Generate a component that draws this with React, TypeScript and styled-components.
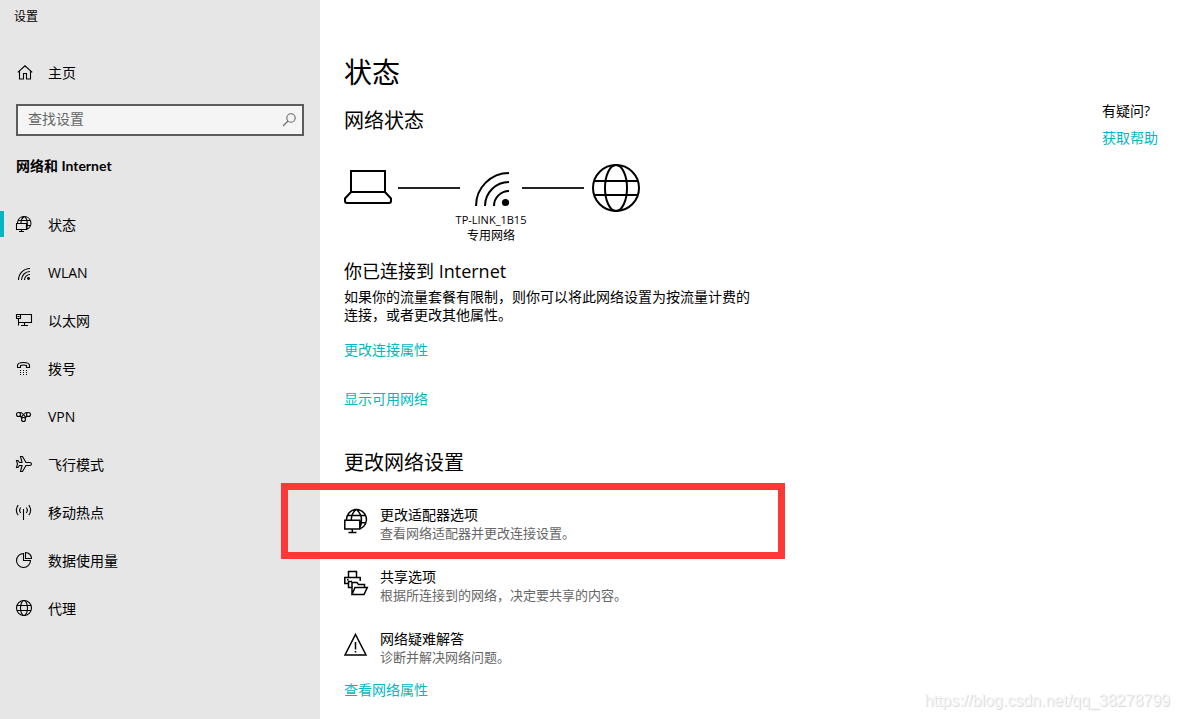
import React from 'react';
import styled, { createGlobalStyle } from 'styled-components';

const GlobalStyle = createGlobalStyle`
  * { box-sizing: border-box; }
  body {
    margin: 0;
    background: #fff;
    color: #000;
    font: 14px/18px "Open Sans", "Noto Sans CJK SC", sans-serif;
  }
  h1, h2, h3, p, ul { margin: 0; padding: 0; font-weight: 400; }
  ul { list-style: none; }
  button, input { font: inherit; color: inherit; }
`;

const Page = styled.div`
  display: flex;
  min-height: 100vh;
  position: relative;
`;

const Sidebar = styled.aside`
  flex: none;
  width: 320px;
  background: #e6e6e6;
`;

const WindowTitle = styled.div`
  padding: 0 14px;
  font-size: 12px;
  line-height: 34px;
`;

const SideLink = styled.a<{ $active?: boolean }>`
  display: flex;
  align-items: center;
  gap: 16px;
  height: 48px;
  padding: 0 16px 0 12px;
  color: #000;
  text-decoration: none;
  border-left: 4px solid transparent;
  border-image: ${p => (p.$active
    ? 'linear-gradient(transparent 25%, #00b7c3 25%, #00b7c3 75%, transparent 75%) 1'
    : 'none')};
`;

const SideLabel = styled.span`
  padding-top: 2px;
`;

const HomeRow = styled.div`
  margin-top: 14px;
`;

const SearchForm = styled.form`
  display: flex;
  align-items: center;
  height: 32px;
  margin: 8px 16px 0;
  border: 2px solid #5c5c5c;
  background: #f5f5f5;
`;

const SearchInput = styled.input`
  flex: 1;
  min-width: 0;
  padding: 0 10px 2px;
  border: 0;
  outline: 0;
  background: transparent;
  line-height: 20px;
  &::placeholder { color: #666; opacity: 1; }
`;

const SearchButton = styled.button`
  display: flex;
  padding: 0 5px;
  border: 0;
  background: transparent;
  color: #666;
`;

const Category = styled.h2`
  margin: 20px 16px 24px;
  font-family: Lato, "Noto Sans CJK SC", sans-serif;
  font-size: 14px;
  font-weight: 700;
  line-height: 20px;
`;

const Main = styled.main`
  flex: 1;
  min-width: 0;
  display: flex;
  justify-content: space-between;
  padding: 52px 20px 16px 24px;
`;

const Content = styled.div`
  min-width: 0;
`;

const PageTitle = styled.h1`
  font-size: 28px;
  line-height: 40px;
`;

const SectionTitle = styled.h2`
  margin-top: 15px;
  font-size: 20px;
  line-height: 28px;
`;

const Diagram = styled.div`
  display: grid;
  grid-template-columns: 48px 62px 50px 62px 52px;
  grid-template-rows: 48px auto;
  column-gap: 6px;
  align-items: center;
  margin-top: 29px;
`;

const Connector = styled.span`
  height: 2px;
  background: #222;
`;

const NetworkLabel = styled.div`
  display: flex;
  flex-direction: column;
  grid-column: 2 / 5;
  justify-self: center;
  font-size: 12px;
  line-height: 16px;
  text-align: center;
`;

const NetworkName = styled.span`
  font-size: 11px;
`;

const StatusTitle = styled.h3`
  margin-top: 15px;
  font-size: 18px;
  line-height: 24px;
`;

const StatusText = styled.p`
  max-width: 412px;
  margin-top: 5px;
`;

const LinkRow = styled.p<{ $gap: number }>`
  margin-top: ${p => p.$gap}px;
  line-height: 20px;
`;

const Link = styled.a`
  color: #00b7c3;
  text-decoration: none;
`;

const SettingsTitle = styled(SectionTitle)`
  margin-top: 40px;
`;

const OptionList = styled.ul`
  display: flex;
  flex-direction: column;
  gap: 26px;
  margin-top: 29px;
`;

const OptionItem = styled.li`
  position: relative;
`;

const Option = styled.button`
  display: flex;
  gap: 12px;
  padding: 0;
  border: 0;
  background: transparent;
  text-align: left;
`;

const OptionText = styled.span`
  display: flex;
  flex-direction: column;
`;

const OptionHint = styled.span`
  color: #666;
  font-size: 13px;
`;

const Highlight = styled.span`
  position: absolute;
  top: -23px;
  left: -63px;
  width: 504px;
  height: 76px;
  border: 7px solid #fd3836;
  pointer-events: none;
`;

const Help = styled.aside`
  flex: none;
  width: 57px;
  padding-top: 49px;
  line-height: 20px;
`;

const Watermark = styled.div`
  position: absolute;
  right: 9px;
  bottom: 8px;
  color: #f6f6f6;
  font: 16px/20px "Liberation Sans", sans-serif;
  text-shadow: 1px 1px 0 #dcdcdc;
`;

const Svg = styled.svg`
  flex: none;
  overflow: visible;
  fill: none;
  stroke: currentColor;
`;

const OptionSvg = styled(Svg)`
  margin-top: 2px;
`;

type Glyph = React.ReactNode;

const Icon = ({ children }: { children: Glyph }) => (
  <Svg width="16" height="16" viewBox="0 0 16 16" strokeWidth="1.1" aria-hidden="true">{children}</Svg>
);

const OptionIcon = ({ children }: { children: Glyph }) => (
  <OptionSvg width="24" height="26" viewBox="0 0 24 26" strokeWidth="1.5" aria-hidden="true">{children}</OptionSvg>
);

const globe = (
  <>
    <circle cx="8" cy="8" r="7.5" />
    <ellipse cx="8" cy="8" rx="3.5" ry="7.5" />
    <path d="M1 5.5h14M1 10.5h14" />
  </>
);

const icons = {
  home: <path d="M1.8 8.3 9 1.8l7.2 6.5M3.5 7v8h4V9.500h3V15h4V7" />,
  status: (
    <path d="M1.500 7A6.700 6.700 0 1 1 11 13.300M8 .5C6 2 5 4 5 7M8.500 .5C10.500 2 11.500 5 11.300 9c0 1-.2 2.500-.8 4M2 4.500h12.500M10.500 9.500h4.200M.5 7.500h10v6H.5zM5.500 13.500v2M3 15.500h5" />
  ),
  wlan: (
    <>
      <path d="M2.500 16A11.500 11.500 0 0 1 14 4.500M5.500 16A8.500 8.500 0 0 1 14 7.500M8.500 16a5.500 5.500 0 0 1 5.500-5.500" />
      <circle cx="12.500" cy="14.500" r="1.400" fill="currentColor" stroke="none" />
    </>
  ),
  ethernet: <path d="M.5 2.500h4v4h-4zM4.500 2.500h11v8h-13M1.500 4.500h2M2.500 6.500v7M8.500 10.500v3M5 13.500h7" />,
  dialup: (
    <>
      <path d="M1.500 7.500V5.500C1.500 3.500 4 2.500 7.500 2.500s6 1 6 3v2h-3V5.500C9 5 6 5 4.500 5.500v2z" />
      <path d="M4 10.500h1M7 10.500h1M10 10.500h1M4 12.500h1M7 12.500h1M10 12.500h1M4 14.500h1M7 14.500h1M10 14.500h1" />
    </>
  ),
  vpn: (
    <>
      <circle cx="2.500" cy="6.500" r="2" />
      <circle cx="12.500" cy="6.500" r="2" />
      <circle cx="7.500" cy="11.500" r="2" />
      <path d="M3.500 4.700h2L9 8.200v2M11.500 4.700h-2L6 8.200v2M4 8l2 2M11 8l-2 2" />
    </>
  ),
  airplane: (
    <path d="M15.500 8c0-1-1-1.500-2-1.500H10L6.500.5h-2L6 6.500H3.500L2 4.500H.5L1.500 8l-1 3.500H2l1.500-2H6l-1.500 6h2l3.500-6h3.500c1 0 2-.5 2-1.500z" />
  ),
  hotspot: (
    <path d="M7.500 5v11M4.800 3.500c-1.300 1.500-1.300 4 0 5.500M10.200 3.500c1.300 1.500 1.300 4 0 5.500M2.200 1.200c-2.200 3-2.200 7 0 10M12.800 1.200c2.200 3 2.200 7 0 10" />
  ),
  usage: <path d="M7.500 1.500a7 7 0 1 0 7 7h-7zM9.500.5v6h6a6 6 0 0 0-6-6z" />,
  proxy: globe,
};

const navItems: { label: string; icon: Glyph; active?: boolean }[] = [
  { label: '状态', icon: icons.status, active: true },
  { label: 'WLAN', icon: icons.wlan },
  { label: '以太网', icon: icons.ethernet },
  { label: '拨号', icon: icons.dialup },
  { label: 'VPN', icon: icons.vpn },
  { label: '飞行模式', icon: icons.airplane },
  { label: '移动热点', icon: icons.hotspot },
  { label: '数据使用量', icon: icons.usage },
  { label: '代理', icon: icons.proxy },
];

const options: { title: string; hint: string; icon: Glyph; highlighted?: boolean }[] = [
  {
    title: '更改适配器选项',
    hint: '查看网络适配器并更改连接设置。',
    highlighted: true,
    icon: (
      <path d="M2.500 11.500A10 10 0 1 1 16.500 20.600M12 1.500C9 4 7.500 7.500 7.300 11.500M12.500 1.500c3.500 3 5 6.500 5 10.500 0 3-.5 5.500-2 8M3.500 7.500h17.800M16.500 14.800h5.200M.8 12.300h15v8.800H.8zM8.300 21v3.500M4.500 24.500h8" />
    ),
  },
  {
    title: '共享选项',
    hint: '根据所连接到的网络，决定要共享的内容。',
    icon: (
      <path d="M4.500 7.500v-6h8v6M4.500 13.500H.8v-6h15.400V11M3 9.800h1.500M8 17.500H4.500v-6H8M8 24.500V12.500h5l1.500 2H20.500v3M8 24.500l3-7h12.300l-3.300 7z" />
    ),
  },
  {
    title: '网络疑难解答',
    hint: '诊断并解决网络问题。',
    icon: <path d="M11.500 2.500 22 23H1zM11.500 10v7.500M11.500 19v1.500" />,
  },
];

export default function App() {
  return (
    <>
      <GlobalStyle />
      <Page>
        <Sidebar>
          <WindowTitle>设置</WindowTitle>
          <HomeRow>
            <SideLink href="#home"><Icon>{icons.home}</Icon><SideLabel>主页</SideLabel></SideLink>
          </HomeRow>
          <SearchForm role="search" onSubmit={e => e.preventDefault()}>
            <SearchInput type="text" placeholder="查找设置" aria-label="查找设置" />
            <SearchButton type="submit" aria-label="搜索">
              <Icon><circle cx="10" cy="6" r="4.200" /><path d="M7 9l-5 5" /></Icon>
            </SearchButton>
          </SearchForm>
          <Category>网络和 Internet</Category>
          <nav>
            {navItems.map(item => (
              <SideLink
                key={item.label}
                href={`#${item.label}`}
                $active={item.active}
                aria-current={item.active ? 'page' : undefined}
              >
                <Icon>{item.icon}</Icon>
                <SideLabel>{item.label}</SideLabel>
              </SideLink>
            ))}
          </nav>
        </Sidebar>
        <Main>
          <Content>
            <PageTitle>状态</PageTitle>
            <SectionTitle>网络状态</SectionTitle>
            <Diagram>
              <Svg width="48" height="48" viewBox="0 0 48 48" strokeWidth="2" aria-hidden="true">
                <path d="M7 28V7h34v21M7 28h34l6 6.500V37q0 2-2 2H3q-2 0-2-2v-2.500z" />
              </Svg>
              <Connector />
              <Svg width="50" height="48" viewBox="0 0 50 48" strokeWidth="2" aria-hidden="true">
                <path d="M10 42A33 33 0 0 1 43 9M19 42a24 24 0 0 1 24-24M28 42a15 15 0 0 1 15-15" />
                <circle cx="39.500" cy="38.500" r="3.600" fill="currentColor" stroke="none" />
              </Svg>
              <Connector />
              <Svg width="52" height="48" viewBox="0 0 52 48" strokeWidth="2" aria-hidden="true">
                <circle cx="26" cy="24" r="23" />
                <ellipse cx="26" cy="24" rx="11" ry="23" />
                <path d="M4 17h44M4 31h44" />
              </Svg>
              <NetworkLabel>
                <NetworkName>TP-LINK_1B15</NetworkName>
                <span>专用网络</span>
              </NetworkLabel>
            </Diagram>
            <StatusTitle>你已连接到 Internet</StatusTitle>
            <StatusText>如果你的流量套餐有限制，则你可以将此网络设置为按流量计费的连接，或者更改其他属性。</StatusText>
            <LinkRow $gap={16}><Link href="#properties">更改连接属性</Link></LinkRow>
            <LinkRow $gap={29}><Link href="#networks">显示可用网络</Link></LinkRow>
            <SettingsTitle>更改网络设置</SettingsTitle>
            <OptionList>
              {options.map(option => (
                <OptionItem key={option.title}>
                  <Option type="button">
                    <OptionIcon>{option.icon}</OptionIcon>
                    <OptionText>
                      <span>{option.title}</span>
                      <OptionHint>{option.hint}</OptionHint>
                    </OptionText>
                  </Option>
                  {option.highlighted && <Highlight />}
                </OptionItem>
              ))}
            </OptionList>
            <LinkRow $gap={14}><Link href="#view">查看网络属性</Link></LinkRow>
          </Content>
          <Help>
            <p>有疑问?</p>
            <LinkRow $gap={7}><Link href="#help">获取帮助</Link></LinkRow>
          </Help>
        </Main>
        <Watermark>https://blog.csdn.net/qq_38278799</Watermark>
      </Page>
    </>
  );
}
